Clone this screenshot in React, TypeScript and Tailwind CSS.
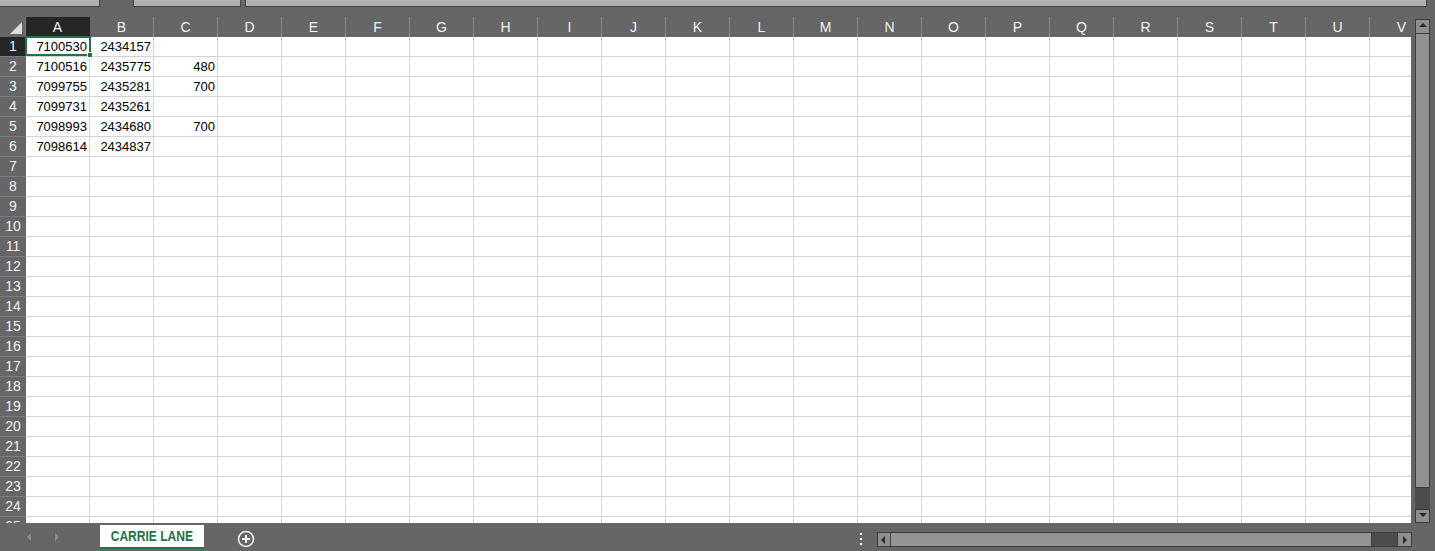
import React from 'react';

const cols = 'ABCDEFGHIJKLMNOPQRSTUV'.split('');

const data: Record<number, string[]> = {
  1: ['7100530', '2434157', ''],
  2: ['7100516', '2435775', '480'],
  3: ['7099755', '2435281', '700'],
  4: ['7099731', '2435261', ''],
  5: ['7098993', '2434680', '700'],
  6: ['7098614', '2434837', ''],
};

const rows = Array.from({ length: 25 }, (_, i) => i + 1);

function Arrow({ dir, className }: { dir: 'up' | 'down' | 'left' | 'right'; className?: string }) {
  const pts = {
    up: '1,6 5,2 9,6',
    down: '1,2 5,6 9,2',
    left: '6,1 2,5 6,9',
    right: '3,1 7,5 3,9',
  }[dir];
  return (
    <svg width="10" height="10" viewBox="0 0 10 10" className={className}>
      <polygon points={pts} fill="currentColor" />
    </svg>
  );
}

export default function App() {
  return (
    <div
      className="flex h-[551px] w-[1435px] flex-col overflow-hidden bg-[#666666]"
      style={{ fontFamily: '"Liberation Sans", Arial, sans-serif' }}
    >
      {/* ribbon remnants */}
      <div className="flex h-[17px] shrink-0 items-start">
        <div className="h-[7px] w-[100px] border-b border-r border-[#444] bg-[#b1b1b1]" />
        <div className="ml-[33px] h-[7px] w-[108px] border-x border-b border-[#444] bg-[#b1b1b1]" />
        <div className="ml-[4px] h-[7px] w-[1182px] border-x border-b border-[#444] bg-[#b1b1b1]" />
      </div>

      <div className="flex h-[506px] shrink-0">
        {/* grid */}
        <div className="relative w-[1411px] overflow-hidden">
          <div className="flex h-[20px]">
            <div className="flex w-[26px] shrink-0 items-end justify-end border-r border-[#7d7d7d] pb-[3px] pr-[3px]">
              <svg width="12" height="12" viewBox="0 0 12 12">
                <polygon points="12,0 12,12 0,12" fill="#dcdcdc" />
              </svg>
            </div>
            {cols.map((c) => (
              <div
                key={c}
                className={`flex h-[20px] w-[64px] shrink-0 items-center justify-center border-r text-[14px] text-[#f2f2f2] ${
                  c === 'A' ? 'border-[#262626] bg-[#262626]' : 'border-[#8a8a8a]'
                }`}
              >
                {c}
              </div>
            ))}
          </div>
          {rows.map((r) => (
            <div key={r} className="flex h-[20px]">
              <div
                className={`flex w-[26px] shrink-0 items-center justify-center border-b border-[#7d7d7d] text-[14px] text-[#f2f2f2] ${
                  r === 1 ? 'bg-[#262626]' : ''
                }`}
              >
                {r}
              </div>
              {cols.map((c, ci) => (
                <div
                  key={c}
                  className="h-[20px] w-[64px] shrink-0 border-b border-r border-[#d4d4d4] bg-white pr-[2px] text-right text-[13px] leading-[19px] text-black"
                >
                  {data[r] && ci < 3 ? data[r][ci] : ''}
                </div>
              ))}
            </div>
          ))}
          {/* active cell */}
          <div className="pointer-events-none absolute left-[25px] top-[19px] h-[20px] w-[66px] border-2 border-[#217346]">
            <div className="absolute -bottom-[4px] -right-[4px] h-[6px] w-[6px] border border-white bg-[#217346]" />
          </div>
        </div>

        {/* vertical scrollbar */}
        <div className="flex w-[24px] flex-col pl-[4px] pr-[5px] pt-[2px]">
          <div className="flex h-[15px] items-center justify-center border border-[#3c3c3c] bg-[#8f8f8f] text-[#2a2a2a]">
            <Arrow dir="up" />
          </div>
          <div className="h-[456px] border-x border-b border-[#3c3c3c] bg-[#919191]" />
          <div className="h-[21px] bg-[#4d4d4d]" />
          <div className="flex h-[14px] items-center justify-center border border-[#3c3c3c] bg-[#8f8f8f] text-[#2a2a2a]">
            <Arrow dir="down" />
          </div>
        </div>
      </div>

      {/* sheet tabs */}
      <div className="flex h-[28px] shrink-0 items-start">
        <div className="flex h-[28px] w-[100px] items-center gap-[17px] pl-[25px] text-[#8c8c8c]">
          <Arrow dir="left" />
          <Arrow dir="right" />
        </div>
        <div className="mt-[2px] flex h-[24px] w-[104px] items-center justify-center border-b-2 border-[#217346] bg-white">
          <span className="inline-block scale-x-[0.86] whitespace-nowrap text-[14px] font-bold text-[#217346]">
            CARRIE LANE
          </span>
        </div>
        <div className="ml-[33px] mt-[7px]">
          <svg width="18" height="18" viewBox="0 0 18 18">
            <circle cx="9" cy="9" r="7.5" fill="none" stroke="#f5f5f5" strokeWidth="1.6" />
            <path d="M9 5v8M5 9h8" stroke="#f5f5f5" strokeWidth="2" />
          </svg>
        </div>
        <div className="ml-[605px] mt-[10px] flex flex-col gap-[3px]">
          <div className="h-[2px] w-[2px] bg-white" />
          <div className="h-[2px] w-[2px] bg-white" />
          <div className="h-[2px] w-[2px] bg-white" />
        </div>
        <div className="ml-[15px] mt-[9px] flex h-[15px] w-[535px] border border-[#3c3c3c] bg-[#4d4d4d]">
          <div className="flex w-[13px] items-center justify-center border-r border-[#3c3c3c] bg-[#8f8f8f] text-[#2a2a2a]">
            <Arrow dir="left" />
          </div>
          <div className="w-[481px] border-r border-[#3c3c3c] bg-[#959595]" />
          <div className="flex-1" />
          <div className="flex w-[14px] items-center justify-center border-l border-[#3c3c3c] bg-[#8f8f8f] text-[#2a2a2a]">
            <Arrow dir="right" />
          </div>
        </div>
      </div>
    </div>
  );
}
